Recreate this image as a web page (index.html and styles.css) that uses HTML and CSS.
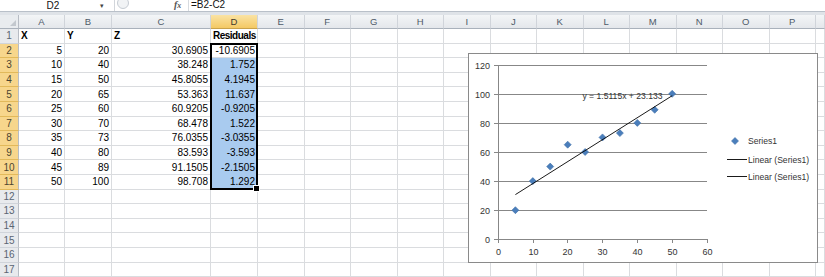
FILE: index.html
```html
<!DOCTYPE html>
<html>
<head>
<meta charset="utf-8">
<link rel="stylesheet" href="styles.css">
</head>
<body>
<div class="fbar">
  <div class="namebox"><span class="name">D2</span><span class="arrow">&#9662;</span></div>
  <div class="fbtn"></div>
  <div class="fx">f<span class="fxx">x</span></div>
  <div class="formula">=B2-C2</div>
</div>
<div class="band"></div>
<div class="sheet">
  <div class="row hdr">
    <div class="rh corner"></div>
    <div class="c ca">A</div><div class="c cb">B</div><div class="c cc">C</div><div class="c cd hlc">D</div>
    <div class="c">E</div><div class="c">F</div><div class="c">G</div><div class="c">H</div><div class="c">I</div><div class="c">J</div><div class="c">K</div><div class="c">L</div><div class="c">M</div><div class="c">N</div><div class="c">O</div><div class="c">P</div><div class="c cq"></div>
  </div>
  <div class="row">
    <div class="rh">1</div>
    <div class="c ca b">X</div><div class="c cb b">Y</div><div class="c cc b">Z</div><div class="c cd b res">Residuals</div>
    <div class="c"></div><div class="c"></div><div class="c"></div><div class="c"></div><div class="c"></div><div class="c"></div><div class="c"></div><div class="c"></div><div class="c"></div><div class="c"></div><div class="c"></div><div class="c"></div><div class="c cq"></div>
  </div>
  <div class="row">
    <div class="rh hl">2</div>
    <div class="c ca n">5</div><div class="c cb n">20</div><div class="c cc n">30.6905</div><div class="c cd n">-10.6905</div>
    <div class="c"></div><div class="c"></div><div class="c"></div><div class="c"></div><div class="c"></div><div class="c"></div><div class="c"></div><div class="c"></div><div class="c"></div><div class="c"></div><div class="c"></div><div class="c"></div><div class="c cq"></div>
  </div>
  <div class="row">
    <div class="rh hl">3</div>
    <div class="c ca n">10</div><div class="c cb n">40</div><div class="c cc n">38.248</div><div class="c cd n sel">1.752</div>
    <div class="c"></div><div class="c"></div><div class="c"></div><div class="c"></div><div class="c"></div><div class="c"></div><div class="c"></div><div class="c"></div><div class="c"></div><div class="c"></div><div class="c"></div><div class="c"></div><div class="c cq"></div>
  </div>
  <div class="row">
    <div class="rh hl">4</div>
    <div class="c ca n">15</div><div class="c cb n">50</div><div class="c cc n">45.8055</div><div class="c cd n sel">4.1945</div>
    <div class="c"></div><div class="c"></div><div class="c"></div><div class="c"></div><div class="c"></div><div class="c"></div><div class="c"></div><div class="c"></div><div class="c"></div><div class="c"></div><div class="c"></div><div class="c"></div><div class="c cq"></div>
  </div>
  <div class="row">
    <div class="rh hl">5</div>
    <div class="c ca n">20</div><div class="c cb n">65</div><div class="c cc n">53.363</div><div class="c cd n sel">11.637</div>
    <div class="c"></div><div class="c"></div><div class="c"></div><div class="c"></div><div class="c"></div><div class="c"></div><div class="c"></div><div class="c"></div><div class="c"></div><div class="c"></div><div class="c"></div><div class="c"></div><div class="c cq"></div>
  </div>
  <div class="row">
    <div class="rh hl">6</div>
    <div class="c ca n">25</div><div class="c cb n">60</div><div class="c cc n">60.9205</div><div class="c cd n sel">-0.9205</div>
    <div class="c"></div><div class="c"></div><div class="c"></div><div class="c"></div><div class="c"></div><div class="c"></div><div class="c"></div><div class="c"></div><div class="c"></div><div class="c"></div><div class="c"></div><div class="c"></div><div class="c cq"></div>
  </div>
  <div class="row">
    <div class="rh hl">7</div>
    <div class="c ca n">30</div><div class="c cb n">70</div><div class="c cc n">68.478</div><div class="c cd n sel">1.522</div>
    <div class="c"></div><div class="c"></div><div class="c"></div><div class="c"></div><div class="c"></div><div class="c"></div><div class="c"></div><div class="c"></div><div class="c"></div><div class="c"></div><div class="c"></div><div class="c"></div><div class="c cq"></div>
  </div>
  <div class="row">
    <div class="rh hl">8</div>
    <div class="c ca n">35</div><div class="c cb n">73</div><div class="c cc n">76.0355</div><div class="c cd n sel">-3.0355</div>
    <div class="c"></div><div class="c"></div><div class="c"></div><div class="c"></div><div class="c"></div><div class="c"></div><div class="c"></div><div class="c"></div><div class="c"></div><div class="c"></div><div class="c"></div><div class="c"></div><div class="c cq"></div>
  </div>
  <div class="row">
    <div class="rh hl">9</div>
    <div class="c ca n">40</div><div class="c cb n">80</div><div class="c cc n">83.593</div><div class="c cd n sel">-3.593</div>
    <div class="c"></div><div class="c"></div><div class="c"></div><div class="c"></div><div class="c"></div><div class="c"></div><div class="c"></div><div class="c"></div><div class="c"></div><div class="c"></div><div class="c"></div><div class="c"></div><div class="c cq"></div>
  </div>
  <div class="row">
    <div class="rh hl">10</div>
    <div class="c ca n">45</div><div class="c cb n">89</div><div class="c cc n">91.1505</div><div class="c cd n sel">-2.1505</div>
    <div class="c"></div><div class="c"></div><div class="c"></div><div class="c"></div><div class="c"></div><div class="c"></div><div class="c"></div><div class="c"></div><div class="c"></div><div class="c"></div><div class="c"></div><div class="c"></div><div class="c cq"></div>
  </div>
  <div class="row">
    <div class="rh hl">11</div>
    <div class="c ca n">50</div><div class="c cb n">100</div><div class="c cc n">98.708</div><div class="c cd n sel">1.292</div>
    <div class="c"></div><div class="c"></div><div class="c"></div><div class="c"></div><div class="c"></div><div class="c"></div><div class="c"></div><div class="c"></div><div class="c"></div><div class="c"></div><div class="c"></div><div class="c"></div><div class="c cq"></div>
  </div>
  <div class="row">
    <div class="rh">12</div>
    <div class="c ca"></div><div class="c cb"></div><div class="c cc"></div><div class="c cd"></div>
    <div class="c"></div><div class="c"></div><div class="c"></div><div class="c"></div><div class="c"></div><div class="c"></div><div class="c"></div><div class="c"></div><div class="c"></div><div class="c"></div><div class="c"></div><div class="c"></div><div class="c cq"></div>
  </div>
  <div class="row">
    <div class="rh">13</div>
    <div class="c ca"></div><div class="c cb"></div><div class="c cc"></div><div class="c cd"></div>
    <div class="c"></div><div class="c"></div><div class="c"></div><div class="c"></div><div class="c"></div><div class="c"></div><div class="c"></div><div class="c"></div><div class="c"></div><div class="c"></div><div class="c"></div><div class="c"></div><div class="c cq"></div>
  </div>
  <div class="row">
    <div class="rh">14</div>
    <div class="c ca"></div><div class="c cb"></div><div class="c cc"></div><div class="c cd"></div>
    <div class="c"></div><div class="c"></div><div class="c"></div><div class="c"></div><div class="c"></div><div class="c"></div><div class="c"></div><div class="c"></div><div class="c"></div><div class="c"></div><div class="c"></div><div class="c"></div><div class="c cq"></div>
  </div>
  <div class="row">
    <div class="rh">15</div>
    <div class="c ca"></div><div class="c cb"></div><div class="c cc"></div><div class="c cd"></div>
    <div class="c"></div><div class="c"></div><div class="c"></div><div class="c"></div><div class="c"></div><div class="c"></div><div class="c"></div><div class="c"></div><div class="c"></div><div class="c"></div><div class="c"></div><div class="c"></div><div class="c cq"></div>
  </div>
  <div class="row">
    <div class="rh">16</div>
    <div class="c ca"></div><div class="c cb"></div><div class="c cc"></div><div class="c cd"></div>
    <div class="c"></div><div class="c"></div><div class="c"></div><div class="c"></div><div class="c"></div><div class="c"></div><div class="c"></div><div class="c"></div><div class="c"></div><div class="c"></div><div class="c"></div><div class="c"></div><div class="c cq"></div>
  </div>
  <div class="row">
    <div class="rh">17</div>
    <div class="c ca"></div><div class="c cb"></div><div class="c cc"></div><div class="c cd"></div>
    <div class="c"></div><div class="c"></div><div class="c"></div><div class="c"></div><div class="c"></div><div class="c"></div><div class="c"></div><div class="c"></div><div class="c"></div><div class="c"></div><div class="c"></div><div class="c"></div><div class="c cq"></div>
  </div>

  <div class="selbox"><div class="handle"></div></div>

  <div class="chart">
    <svg width="350" height="210" viewBox="0 0 350 210" xmlns="http://www.w3.org/2000/svg">
      <rect x="0.5" y="0.5" width="349" height="209" fill="#fff" stroke="#8a8a8a"/>
      <g stroke="#878787" stroke-width="1" shape-rendering="crispEdges">
        <line x1="30" y1="12.5" x2="239" y2="12.5"/>
        <line x1="30" y1="41.5" x2="239" y2="41.5"/>
        <line x1="30" y1="70.5" x2="239" y2="70.5"/>
        <line x1="30" y1="99.5" x2="239" y2="99.5"/>
        <line x1="30" y1="128.5" x2="239" y2="128.5"/>
        <line x1="30" y1="157.5" x2="239" y2="157.5"/>
        <line x1="26" y1="186.5" x2="240" y2="186.5"/>
        <line x1="30.5" y1="12" x2="30.5" y2="190"/>
        <line x1="26" y1="12.5" x2="30" y2="12.5"/>
        <line x1="26" y1="41.5" x2="30" y2="41.5"/>
        <line x1="26" y1="70.5" x2="30" y2="70.5"/>
        <line x1="26" y1="99.5" x2="30" y2="99.5"/>
        <line x1="26" y1="128.5" x2="30" y2="128.5"/>
        <line x1="26" y1="157.5" x2="30" y2="157.5"/>
        <line x1="65.5" y1="186" x2="65.5" y2="190"/>
        <line x1="99.5" y1="186" x2="99.5" y2="190"/>
        <line x1="134.5" y1="186" x2="134.5" y2="190"/>
        <line x1="169.5" y1="186" x2="169.5" y2="190"/>
        <line x1="204.5" y1="186" x2="204.5" y2="190"/>
        <line x1="239.5" y1="186" x2="239.5" y2="190"/>
      </g>
      <g class="axis" text-anchor="end">
        <text x="22" y="15.5">120</text>
        <text x="22" y="44.5">100</text>
        <text x="22" y="73.5">80</text>
        <text x="22" y="102.5">60</text>
        <text x="22" y="131.5">40</text>
        <text x="22" y="160.5">20</text>
        <text x="22" y="189.5">0</text>
      </g>
      <g class="axis" text-anchor="middle">
        <text x="30.5" y="202">0</text>
        <text x="65.5" y="202">10</text>
        <text x="99.5" y="202">20</text>
        <text x="134.5" y="202">30</text>
        <text x="169.5" y="202">40</text>
        <text x="204.5" y="202">50</text>
        <text x="239.5" y="202">60</text>
      </g>
      <g fill="#4a7ebb" stroke="#3e6fa8" stroke-width="0.6">
        <path d="M47.4 153.7 L50.9 157.2 L47.4 160.7 L43.9 157.2 Z"/>
        <path d="M64.8 124.6 L68.3 128.1 L64.8 131.6 L61.3 128.1 Z"/>
        <path d="M82.2 110.1 L85.7 113.6 L82.2 117.1 L78.7 113.6 Z"/>
        <path d="M99.7 88.2 L103.2 91.7 L99.7 95.2 L96.2 91.7 Z"/>
        <path d="M117.1 95.5 L120.6 99 L117.1 102.5 L113.6 99 Z"/>
        <path d="M134.5 80.9 L138 84.4 L134.5 87.9 L131 84.4 Z"/>
        <path d="M151.9 76.6 L155.4 80.1 L151.9 83.6 L148.4 80.1 Z"/>
        <path d="M169.3 66.4 L172.8 69.9 L169.3 73.4 L165.8 69.9 Z"/>
        <path d="M186.7 53.3 L190.2 56.8 L186.7 60.3 L183.2 56.8 Z"/>
        <path d="M204.2 37.3 L207.7 40.8 L204.2 44.3 L200.7 40.8 Z"/>
      </g>
      <line x1="47.4" y1="141.6" x2="204.2" y2="42.7" stroke="#000" stroke-width="0.9"/>
      <text class="eq" x="154.5" y="45.5" text-anchor="middle">y = 1.5115x + 23.133</text>
      <path d="M267 84.5 L270.5 88 L267 91.5 L263.5 88 Z" fill="#4a7ebb" stroke="#3e6fa8" stroke-width="0.6"/>
      <text class="leg" x="280" y="91">Series1</text>
      <line x1="259" y1="106.5" x2="279" y2="106.5" stroke="#000" stroke-width="0.9"/>
      <text class="leg" x="280" y="109.5">Linear (Series1)</text>
      <line x1="259" y1="123.5" x2="279" y2="123.5" stroke="#000" stroke-width="0.9"/>
      <text class="leg" x="280" y="126.5">Linear (Series1)</text>
    </svg>
  </div>
</div>
</body>
</html>
```
FILE: styles.css
```css
html, body {
  margin: 0;
  padding: 0;
  background: #fff;
}
body {
  width: 825px;
  height: 277px;
  overflow: hidden;
  font-family: "Liberation Sans", Arial, sans-serif;
  color: #000;
}
.fbar {
  display: flex;
  align-items: center;
  height: 12px;
  box-sizing: border-box;
  border-bottom: 1px solid #b9c0c9;
  font-size: 10px;
  background: #fff;
}
.namebox {
  width: 115px;
  height: 11px;
  display: flex;
  align-items: center;
  border-right: 1px solid #d2d6db;
  box-sizing: border-box;
}
.name {
  flex: 1;
  text-align: center;
  padding-left: 6px;
  color: #111;
  line-height: 10px;
}
.arrow {
  width: 14px;
  font-size: 7px;
  color: #444;
  text-align: left;
}
.fbtn {
  width: 12px;
  height: 12px;
  margin-left: 2px;
  margin-top: -6px;
  border: 1px solid #c6ccd3;
  border-radius: 50%;
  background: #f1f3f5;
  box-sizing: border-box;
}
.fx {
  margin-left: 45px;
  width: 14px;
  font-family: "Liberation Serif", serif;
  font-style: italic;
  font-weight: bold;
  font-size: 10px;
  color: #555;
  line-height: 10px;
}
.fxx {
  font-size: 8px;
}
.formula {
  padding-left: 2px;
  border-left: 1px solid #d7dbe0;
  height: 11px;
  line-height: 10px;
  color: #111;
  flex: 1;
}
.band {
  height: 3px;
  background: #dfe3e8;
}
.sheet {
  position: relative;
}
.row {
  display: flex;
  height: 14.6px;
}
.row.hdr {
  height: 14px;
}
.rh {
  width: 19px;
  flex: none;
  box-sizing: border-box;
  background: #e8eaed;
  border-right: 1px solid #b7bcc4;
  border-bottom: 1px solid #d0d4da;
  color: #5a6573;
  font-size: 10px;
  display: flex;
  align-items: center;
  justify-content: center;
}
.rh.hl {
  background: #f7d68c;
  color: #4c4530;
  border-bottom-color: #e2b95a;
}
.corner {
  position: relative;
  background: #e9ecef;
  border-bottom: 1px solid #a9b1bb;
}
.corner::after {
  content: "";
  position: absolute;
  right: 2px;
  bottom: 2px;
  width: 0;
  height: 0;
  border-left: 6px solid transparent;
  border-bottom: 6px solid #c3c8ce;
}
.c {
  width: 46.5px;
  flex: none;
  box-sizing: border-box;
  border-right: 1px solid #dadcdf;
  border-bottom: 1px solid #dadcdf;
  font-size: 10px;
  display: flex;
  align-items: center;
  overflow: visible;
  white-space: nowrap;
}
.ca { width: 46px; }
.cb { width: 47px; }
.cc { width: 99px; }
.cd { width: 47px; }
.cq { flex: 1; width: auto; }
.hdr .c {
  justify-content: center;
  background: linear-gradient(#f3f5f7, #e4e7eb);
  border-right: 1px solid #d0d4da;
  border-bottom: 1px solid #a9b1bb;
  color: #4e5a68;
  font-size: 9.5px;
}
.hdr .c.hlc {
  background: linear-gradient(#fae3a4, #f4c964);
  color: #3f3a2c;
  border-bottom-color: #c9a24a;
}
.b {
  font-weight: bold;
  padding-left: 2px;
}
.res {
  font-size: 10px;
  letter-spacing: -0.5px;
}
.n {
  justify-content: flex-end;
  padding-right: 2px;
}
.sel {
  background: #a9cbef;
  border-bottom-color: #a9cbef;
}
.selbox {
  position: absolute;
  left: 210px;
  top: 28px;
  width: 48px;
  height: 147px;
  box-sizing: border-box;
  border: 2px solid #000;
}
.handle {
  position: absolute;
  right: -4px;
  bottom: -4px;
  width: 5px;
  height: 5px;
  background: #000;
  border: 1px solid #fff;
}
.chart {
  position: absolute;
  left: 468px;
  top: 38px;
  width: 350px;
  height: 210px;
}
.chart svg {
  display: block;
}
.axis {
  font-family: "Liberation Sans", Arial, sans-serif;
  font-size: 9px;
  fill: #333;
}
.eq {
  font-family: "Liberation Sans", Arial, sans-serif;
  font-size: 8.6px;
  fill: #333;
}
.leg {
  font-family: "Liberation Sans", Arial, sans-serif;
  font-size: 8.6px;
  fill: #333;
}
```
